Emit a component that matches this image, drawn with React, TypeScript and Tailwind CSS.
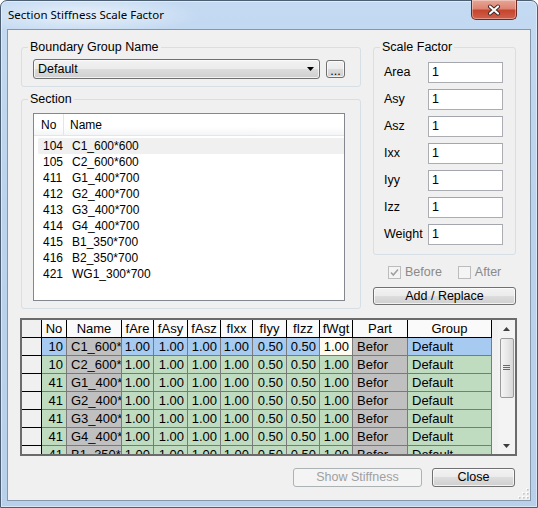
import React from 'react';

const cols = ['No', 'Name', 'fAre', 'fAsy', 'fAsz', 'fIxx', 'fIyy', 'fIzz', 'fWgt', 'Part', 'Group'];
const rows: [string, string][] = [
  ['10', 'C1_600*'],
  ['10', 'C2_600*'],
  ['41', 'G1_400*'],
  ['41', 'G2_400*'],
  ['41', 'G3_400*'],
  ['41', 'G4_400*'],
  ['41', 'B1_350*'],
];
const vals = ['1.00', '1.00', '1.00', '1.00', '0.50', '0.50', '1.00'];
const sections: [string, string][] = [
  ['104', 'C1_600*600'],
  ['105', 'C2_600*600'],
  ['411', 'G1_400*700'],
  ['412', 'G2_400*700'],
  ['413', 'G3_400*700'],
  ['414', 'G4_400*700'],
  ['415', 'B1_350*700'],
  ['416', 'B2_350*700'],
  ['421', 'WG1_300*700'],
];
const factors = ['Area', 'Asy', 'Asz', 'Ixx', 'Iyy', 'Izz', 'Weight'];

function Group({ title, className, children }: { title: string; className?: string; children: React.ReactNode }) {
  return (
    <fieldset className={`border border-[#d5dfe5] rounded-[3px] ${className ?? ''}`}>
      <legend className="ml-[6px] px-[2px] text-[12.5px] leading-[14px] text-black">{title}</legend>
      {children}
    </fieldset>
  );
}

const btn =
  'border border-[#707070] rounded-[3px] bg-[linear-gradient(180deg,#f2f2f2_0%,#ebebeb_50%,#dddddd_50%,#cfcfcf_100%)] flex items-center justify-center text-[12.5px] text-black shadow-[inset_0_0_0_1px_rgba(255,255,255,0.7)]';

function ArrowDown({ className }: { className?: string }) {
  return (
    <svg width="7" height="4" viewBox="0 0 7 4" className={className}>
      <path d="M0 0h7L3.5 4z" fill="#000" />
    </svg>
  );
}

export default function App() {
  return (
    <div className="w-[538px] h-[508px] font-['Liberation_Sans',Arial,sans-serif] text-black">
      <div className="w-[538px] h-[508px] flex flex-col border border-[#4c5e72] rounded-t-[7px] bg-[linear-gradient(180deg,#c4daf2_0%,#bcd3ed_40%,#b9d0ea_100%)] shadow-[inset_0_0_0_1px_rgba(255,255,255,0.45)]">
        {/* Title bar */}
        <div className="h-[28px] flex items-start pl-[7px] pr-[20px] bg-[radial-gradient(ellipse_120px_20px_at_80px_14px,rgba(255,255,255,0.6),rgba(255,255,255,0))] rounded-t-[7px]">
          <div className="mt-[6px] text-[11.5px] leading-[16px] text-black font-['Noto_Sans',sans-serif]">Section Stiffness Scale Factor</div>
          <div className="ml-auto -mt-[1px] w-[46px] h-[20px] rounded-b-[5px] border border-[#6b2b22] border-t-0 bg-[linear-gradient(180deg,#e9a596_0%,#dd8572_45%,#c6452f_55%,#d0614a_100%)] flex items-center justify-center shadow-[inset_0_0_0_1px_rgba(255,255,255,0.35)]">
            <svg width="14" height="12" viewBox="0 0 14 12">
              <path d="M3 2.5l8 7M11 2.5l-8 7" stroke="#3b2622" strokeWidth="4" strokeLinecap="round" />
              <path d="M3 2.5l8 7M11 2.5l-8 7" stroke="#ffffff" strokeWidth="2.2" strokeLinecap="round" />
            </svg>
          </div>
        </div>

        {/* Client area */}
        <div className="relative mx-[6px] h-[472px] border border-[#8497ab] bg-[#f0f0f0] flex flex-col pt-[10px] pl-[13px] pr-[14px]">
          <div className="flex gap-[12px] h-[269px]">
            {/* Left column */}
            <div className="w-[340px] flex flex-col">
              <Group title="Boundary Group Name" className="h-[47px]">
                <div className="mt-[5px] pl-[11px] flex items-center gap-[6px]">
                  <div className={`${btn} w-[287px] h-[20px] !justify-between pl-[4px] pr-[5px]`}>
                    <span className="leading-[14px]">Default</span>
                    <ArrowDown />
                  </div>
                  <div className={`${btn} w-[19px] h-[18px] text-[11px] leading-[10px] pt-[3px]`}>...</div>
                </div>
              </Group>
              <Group title="Section" className="mt-[5px] h-[217px]">
                <div className="mt-[7px] ml-[11px] w-[312px] h-[188px] border border-[#828790] bg-white flex flex-col">
                  <div className="h-[22px] flex text-[12px] border-b border-[#e5e5e5] bg-[linear-gradient(180deg,#ffffff_0%,#ffffff_60%,#f4f5f7_100%)]">
                    <div className="w-[30px] pl-[7px] flex items-center border-r border-[#e5e5e5]">No</div>
                    <div className="pl-[6px] flex items-center">Name</div>
                  </div>
                  <div className="mt-[2px] ml-[4px] flex flex-col text-[12px]">
                    {sections.map(([no, name], i) => (
                      <div key={no} className={`h-[16px] flex items-center ${i === 0 ? 'bg-[#f0f0f0]' : ''}`}>
                        <div className="w-[34px] pl-[5px]">{no}</div>
                        <div>{name}</div>
                      </div>
                    ))}
                  </div>
                </div>
              </Group>
            </div>

            {/* Right column */}
            <div className="w-[143px] flex flex-col">
              <Group title="Scale Factor" className="h-[215px]">
                <div className="mt-[8px] pl-[10px] flex flex-col gap-[6px]">
                  {factors.map((f) => (
                    <div key={f} className="h-[21px] flex items-center">
                      <div className="w-[44px] text-[12.5px]">{f}</div>
                      <div className="w-[75px] h-[21px] bg-white border border-[#abadb3] border-t-[#a3a6ae] flex items-center pl-[3px] text-[12.5px]">1</div>
                    </div>
                  ))}
                </div>
              </Group>
              <div className="mt-[9px] h-[16px] flex items-center pl-[15px] text-[12.5px] text-[#8a8a8a]">
                <div className="w-[13px] h-[13px] border border-[#bcbcbc] bg-[#f4f4f4] flex items-center justify-center">
                  <svg width="9" height="9" viewBox="0 0 9 9">
                    <path d="M1 4.5l2.3 2.5L8 1.5" stroke="#a0a0a0" strokeWidth="1.6" fill="none" />
                  </svg>
                </div>
                <span className="ml-[4px]">Before</span>
                <div className="ml-[16px] w-[13px] h-[13px] border border-[#bcbcbc] bg-[#f4f4f4]" />
                <span className="ml-[4px]">After</span>
              </div>
              <div className={`${btn} mt-[7px] h-[18px] w-[143px]`}>Add / Replace</div>
            </div>
          </div>

          {/* Table */}
          <div className="mt-[9px] -ml-[1px] w-[497px] h-[138px] border-2 border-[#6b6b6b] flex bg-[#f0f0f0] text-[13px] leading-[16px]">
            <div className="w-[476px] h-[134px] overflow-hidden">
              <div className="grid grid-cols-[20px_25px_55px_32px_34px_33px_32px_34px_33px_33px_55px_84px] auto-rows-[18px]">
                <div className="bg-[#f0f0f0] border-r border-b border-black" />
                {cols.map((c) => (
                  <div key={c} className="bg-[#fafafa] border-r border-b border-black flex items-center justify-center whitespace-nowrap overflow-hidden">
                    {c}
                  </div>
                ))}
                {rows.map(([no, name], i) => {
                  const rc = i === 0 ? 'bg-[#a6caf0]' : 'bg-[#c0dcc0]';
                  return (
                    <React.Fragment key={i}>
                      <div className="bg-[#f0f0f0] border-r border-b border-black" />
                      <div className={`${rc} border-r border-b border-[#7a7a7a] flex items-center justify-end pr-[3px]`}>{no}</div>
                      <div className="bg-[#c0c0c0] border-r border-b border-[#7a7a7a] flex items-center pl-[4px] whitespace-nowrap overflow-hidden">{name}</div>
                      {vals.map((v, j) => (
                        <div
                          key={j}
                          className={`${i === 0 && j === 6 ? 'bg-[#fffbf0]' : rc} border-r border-b border-[#7a7a7a] flex items-center justify-end pr-[3px]`}
                        >
                          {v}
                        </div>
                      ))}
                      <div className="bg-[#c0c0c0] border-r border-b border-[#7a7a7a] flex items-center pl-[4px]">Befor</div>
                      <div className={`${rc} border-r border-b border-[#7a7a7a] flex items-center pl-[4px]`}>Default</div>
                    </React.Fragment>
                  );
                })}
              </div>
            </div>
            {/* Scrollbar */}
            <div className="w-[17px] h-[134px] bg-[#f3f3f3] flex flex-col items-center">
              <div className="h-[17px] flex items-center justify-center">
                <svg width="7" height="4" viewBox="0 0 7 4">
                  <path d="M0 4h7L3.5 0z" fill="#404040" />
                </svg>
              </div>
              <div className="w-[14px] h-[60px] mt-[1px] rounded-[2px] border border-[#9a9a9a] bg-[linear-gradient(90deg,#f4f4f4_0%,#e8e8e8_50%,#d8d8d8_100%)] flex items-center justify-center">
                <svg width="7" height="6" viewBox="0 0 7 6">
                  <path d="M0 0.5h7M0 2.5h7M0 4.5h7" stroke="#6a6a6a" strokeWidth="1" />
                </svg>
              </div>
              <div className="mt-auto h-[17px] flex items-center justify-center">
                <ArrowDown className="opacity-75" />
              </div>
            </div>
          </div>

          {/* Buttons */}
          <div className="mt-[12px] flex justify-end gap-[10px] pr-[1px]">
            <div className="w-[129px] h-[19px] border border-[#adb2b5] rounded-[3px] bg-[#f4f4f4] flex items-center justify-center text-[12.5px] text-[#a0a0a0]">
              Show Stiffness
            </div>
            <div className={`${btn} w-[83px] h-[19px]`}>Close</div>
          </div>

          {/* Resize grip */}
          <svg width="12" height="12" viewBox="0 0 12 12" className="absolute right-[1px] bottom-[1px]">
            {[
              [10, 2], [10, 6], [6, 6], [10, 10], [6, 10], [2, 10],
            ].map(([x, y], k) => (
              <g key={k}>
                <rect x={x} y={y} width="1.5" height="1.5" fill="#a9b5c2" />
                <rect x={x - 1} y={y - 1} width="1.5" height="1.5" fill="#ffffff" />
              </g>
            ))}
          </svg>
        </div>
      </div>
    </div>
  );
}
